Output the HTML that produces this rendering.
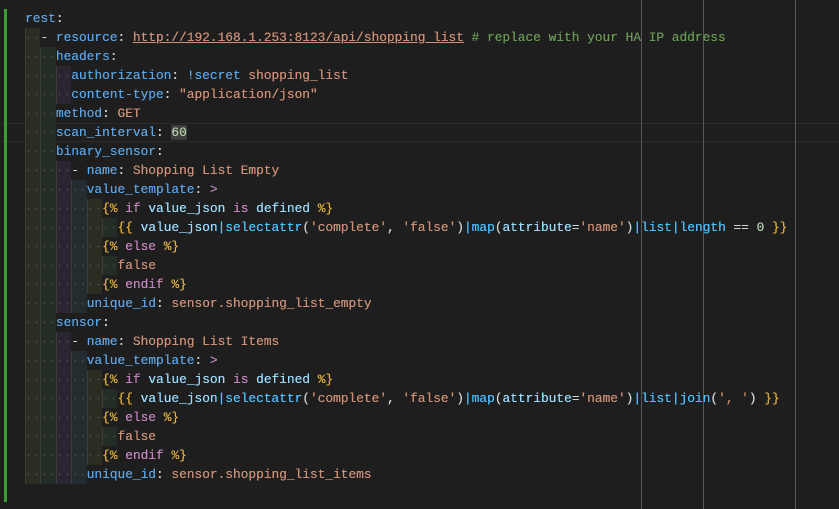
<!DOCTYPE html>
<html><head><meta charset="utf-8"><style>
html,body{margin:0;padding:0;background:#1e1e1e;width:839px;height:509px;overflow:hidden}
#ed{position:absolute;left:25px;top:8.5px;font-family:"Liberation Mono",monospace;font-size:12.83px;line-height:19px;color:#d4d4d4}
.ln{height:19px;position:relative;white-space:pre;text-shadow:0.2px 0 0 currentColor}
i{font-style:normal;color:#4a4a4a;display:inline-block;height:19px;vertical-align:top;box-shadow:inset 1px 0 0 #3e3e38;text-shadow:none}
.a{background:#2c2d22}.b{background:#232c25}.c{background:#2a2531}.d{background:#242c30}
.k{color:#5aa4e6}.s{color:#ce9178}.u{color:#ce9178;text-decoration:underline}.cm{color:#6a9955}.n{color:#b5cea8}
.p{color:#c586c0}.g{color:#e0b040}.v{color:#9cdcfe}.f{color:#4fc1ff}
.bar{position:absolute;left:4px;top:9px;width:3px;height:493px;background:#3d9e35}
.r{position:absolute;top:0;width:1px;height:509px;background:#575757}
.cur{position:absolute;left:0;width:839px;top:122.5px;height:17px;border-top:1px solid #2b2b2b;border-bottom:1px solid #2b2b2b}
.hl{background:#3b3d3f}
</style></head><body>
<div class="cur"></div>
<div class="bar"></div>
<div class="r" style="left:641px"></div>
<div class="r" style="left:703px"></div>
<div class="r" style="left:795px"></div>
<div id="ed">
<div class="ln"><span class="k">rest</span>:</div>
<div class="ln"><i class="a">··</i>- <span class="k">resource</span>: <span class="u">http://192.168.1.253:8123/api/shopping_list</span> <span class="cm"># replace with your HA IP address</span></div>
<div class="ln"><i class="a">··</i><i class="b">··</i><span class="k">headers</span>:</div>
<div class="ln"><i class="a">··</i><i class="b">··</i><i class="c">··</i><span class="k">authorization</span>: <span class="k">!secret</span> <span class="s">shopping_list</span></div>
<div class="ln"><i class="a">··</i><i class="b">··</i><i class="c">··</i><span class="k">content-type</span>: <span class="s">"application/json"</span></div>
<div class="ln"><i class="a">··</i><i class="b">··</i><span class="k">method</span>: <span class="s">GET</span></div>
<div class="ln"><i class="a">··</i><i class="b">··</i><span class="k">scan_interval</span>: <span class="n hl">60</span></div>
<div class="ln"><i class="a">··</i><i class="b">··</i><span class="k">binary_sensor</span>:</div>
<div class="ln"><i class="a">··</i><i class="b">··</i><i class="c">··</i>- <span class="k">name</span>: <span class="s">Shopping List Empty</span></div>
<div class="ln"><i class="a">··</i><i class="b">··</i><i class="c">··</i><i class="d">··</i><span class="k">value_template</span>: <span class="p">&gt;</span></div>
<div class="ln"><i class="a">··</i><i class="b">··</i><i class="c">··</i><i class="d">··</i><i class="a">··</i><span class="g">{%</span> <span class="p">if</span> <span class="v">value_json</span> <span class="p">is</span> <span class="v">defined</span> <span class="g">%}</span></div>
<div class="ln"><i class="a">··</i><i class="b">··</i><i class="c">··</i><i class="d">··</i><i class="a">··</i><i class="b">··</i><span class="g">{{</span> <span class="v">value_json</span><span class="f">|selectattr</span>(<span class="s">'complete'</span>, <span class="s">'false'</span>)<span class="f">|map</span>(<span class="v">attribute</span>=<span class="s">'name'</span>)<span class="f">|list|length</span> == <span class="n">0</span> <span class="g">}}</span></div>
<div class="ln"><i class="a">··</i><i class="b">··</i><i class="c">··</i><i class="d">··</i><i class="a">··</i><span class="g">{%</span> <span class="p">else</span> <span class="g">%}</span></div>
<div class="ln"><i class="a">··</i><i class="b">··</i><i class="c">··</i><i class="d">··</i><i class="a">··</i><i class="b">··</i><span class="s">false</span></div>
<div class="ln"><i class="a">··</i><i class="b">··</i><i class="c">··</i><i class="d">··</i><i class="a">··</i><span class="g">{%</span> <span class="p">endif</span> <span class="g">%}</span></div>
<div class="ln"><i class="a">··</i><i class="b">··</i><i class="c">··</i><i class="d">··</i><span class="k">unique_id</span>: <span class="s">sensor.shopping_list_empty</span></div>
<div class="ln"><i class="a">··</i><i class="b">··</i><span class="k">sensor</span>:</div>
<div class="ln"><i class="a">··</i><i class="b">··</i><i class="c">··</i>- <span class="k">name</span>: <span class="s">Shopping List Items</span></div>
<div class="ln"><i class="a">··</i><i class="b">··</i><i class="c">··</i><i class="d">··</i><span class="k">value_template</span>: <span class="p">&gt;</span></div>
<div class="ln"><i class="a">··</i><i class="b">··</i><i class="c">··</i><i class="d">··</i><i class="a">··</i><span class="g">{%</span> <span class="p">if</span> <span class="v">value_json</span> <span class="p">is</span> <span class="v">defined</span> <span class="g">%}</span></div>
<div class="ln"><i class="a">··</i><i class="b">··</i><i class="c">··</i><i class="d">··</i><i class="a">··</i><i class="b">··</i><span class="g">{{</span> <span class="v">value_json</span><span class="f">|selectattr</span>(<span class="s">'complete'</span>, <span class="s">'false'</span>)<span class="f">|map</span>(<span class="v">attribute</span>=<span class="s">'name'</span>)<span class="f">|list|join</span>(<span class="s">', '</span>) <span class="g">}}</span></div>
<div class="ln"><i class="a">··</i><i class="b">··</i><i class="c">··</i><i class="d">··</i><i class="a">··</i><span class="g">{%</span> <span class="p">else</span> <span class="g">%}</span></div>
<div class="ln"><i class="a">··</i><i class="b">··</i><i class="c">··</i><i class="d">··</i><i class="a">··</i><i class="b">··</i><span class="s">false</span></div>
<div class="ln"><i class="a">··</i><i class="b">··</i><i class="c">··</i><i class="d">··</i><i class="a">··</i><span class="g">{%</span> <span class="p">endif</span> <span class="g">%}</span></div>
<div class="ln"><i class="a">··</i><i class="b">··</i><i class="c">··</i><i class="d">··</i><span class="k">unique_id</span>: <span class="s">sensor.shopping_list_items</span></div>
</div>
</body></html>
